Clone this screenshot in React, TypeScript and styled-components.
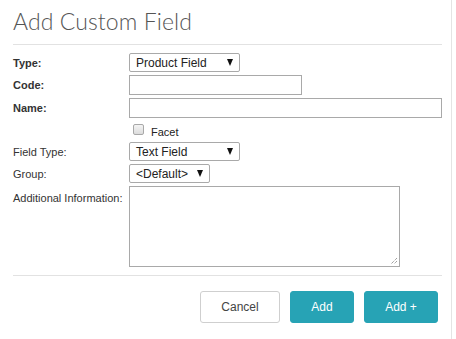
import React from 'react'
import styled, { createGlobalStyle } from 'styled-components'

const GlobalStyle = createGlobalStyle`
  html, body {
    margin: 0;
    padding: 0;
    background: #ffffff;
  }
  body {
    font-family: 'Liberation Sans', Arial, sans-serif;
    color: #333333;
  }
`

const Dialog = styled.div`
  width: 452px;
  height: 339px;
  box-sizing: border-box;
  border-right: 1px solid #e4e4e4;
  background: #ffffff;
  padding: 0 9px 0 13px;
  display: flex;
  flex-direction: column;
`

const Title = styled.h1`
  margin: 0;
  padding: 8px 0 10px;
  font-family: Lato, 'Open Sans', sans-serif;
  font-weight: 300;
  font-size: 23px;
  line-height: 26px;
  color: #555555;
  letter-spacing: 0.1px;
`

const Rule = styled.div`
  height: 1px;
  background: #e2e2e2;
`

const Form = styled.div`
  display: grid;
  grid-template-columns: 116px 1fr;
  grid-template-rows: 19px 20px 20px 18px 19px 19px 81px;
  row-gap: 3px;
  padding-top: 8px;
  padding-bottom: 8px;
`

const Label = styled.div<{ bold?: boolean; top?: boolean }>`
  font-size: 11px;
  font-weight: ${({ bold }) => (bold ? 700 : 400)};
  color: #333333;
  display: flex;
  align-items: ${({ top }) => (top ? 'flex-start' : 'center')};
  padding-top: ${({ top }) => (top ? '6px' : '0')};
`

const Cell = styled.div`
  display: flex;
  align-items: center;
`

const Select = styled.div<{ width: number }>`
  width: ${({ width }) => width}px;
  height: 19px;
  box-sizing: border-box;
  border: 1px solid #a9a9a9;
  border-radius: 2px;
  background: #ffffff;
  display: flex;
  align-items: center;
  justify-content: space-between;
  padding: 0 6px 0 6px;
  font-size: 12px;
  color: #222222;
`

const Caret = styled.span`
  width: 0;
  height: 0;
  border-left: 3.5px solid transparent;
  border-right: 3.5px solid transparent;
  border-top: 7px solid #111111;
`

const Input = styled.div<{ width: number }>`
  width: ${({ width }) => width}px;
  height: 20px;
  box-sizing: border-box;
  border: 1px solid #a9a9a9;
  background: #ffffff;
`

const CheckRow = styled.div`
  display: flex;
  align-items: center;
  height: 18px;
  padding: 3px 0 0 4px;
  box-sizing: border-box;
  gap: 7px;
  font-size: 11px;
  color: #222222;
`

const CheckBox = styled.span`
  width: 11px;
  height: 11px;
  box-sizing: border-box;
  border: 1px solid #a8a8a8;
  border-radius: 2px;
  background: linear-gradient(#f4f4f4, #dcdcdc);
  margin-top: -5px;
`

const TextArea = styled.div`
  position: relative;
  width: 271px;
  height: 81px;
  box-sizing: border-box;
  border: 1px solid #a9a9a9;
  background: #ffffff;
`

const Grip = styled.svg`
  position: absolute;
  right: 1px;
  bottom: 1px;
`

const Footer = styled.div`
  display: flex;
  justify-content: flex-end;
  gap: 10px;
  padding: 15px 4px 0 0;
`

const Button = styled.button<{ primary?: boolean; width: number }>`
  width: ${({ width }) => width}px;
  height: 32px;
  border-radius: 3px;
  font-family: 'Liberation Sans', Arial, sans-serif;
  font-size: 12px;
  cursor: pointer;
  border: 1px solid ${({ primary }) => (primary ? '#27a3b5' : '#cfcfcf')};
  background: ${({ primary }) => (primary ? '#27a3b5' : '#ffffff')};
  color: ${({ primary }) => (primary ? '#ffffff' : '#444444')};
`

export default function App() {
  return (
    <>
      <GlobalStyle />
      <Dialog>
        <Title>Add Custom Field</Title>
        <Rule />
        <Form>
          <Label bold>Type:</Label>
          <Cell>
            <Select width={111}>
              Product Field <Caret />
            </Select>
          </Cell>
          <Label bold>Code:</Label>
          <Cell>
            <Input width={173} />
          </Cell>
          <Label bold>Name:</Label>
          <Cell>
            <Input width={313} />
          </Cell>
          <div />
          <CheckRow>
            <CheckBox />
            Facet
          </CheckRow>
          <Label>Field Type:</Label>
          <Cell>
            <Select width={111}>
              Text Field <Caret />
            </Select>
          </Cell>
          <Label>Group:</Label>
          <Cell>
            <Select width={81}>
              &lt;Default&gt; <Caret />
            </Select>
          </Cell>
          <Label top>Additional Information:</Label>
          <Cell>
            <TextArea>
              <Grip width="9" height="9" viewBox="0 0 9 9">
                <path d="M8 2 L2 8 M8 5 L5 8" stroke="#777" strokeWidth="1" strokeDasharray="1 1" fill="none" />
              </Grip>
            </TextArea>
          </Cell>
        </Form>
        <Rule />
        <Footer>
          <Button width={80}>Cancel</Button>
          <Button primary width={64}>
            Add
          </Button>
          <Button primary width={74}>
            Add +
          </Button>
        </Footer>
      </Dialog>
    </>
  )
}
